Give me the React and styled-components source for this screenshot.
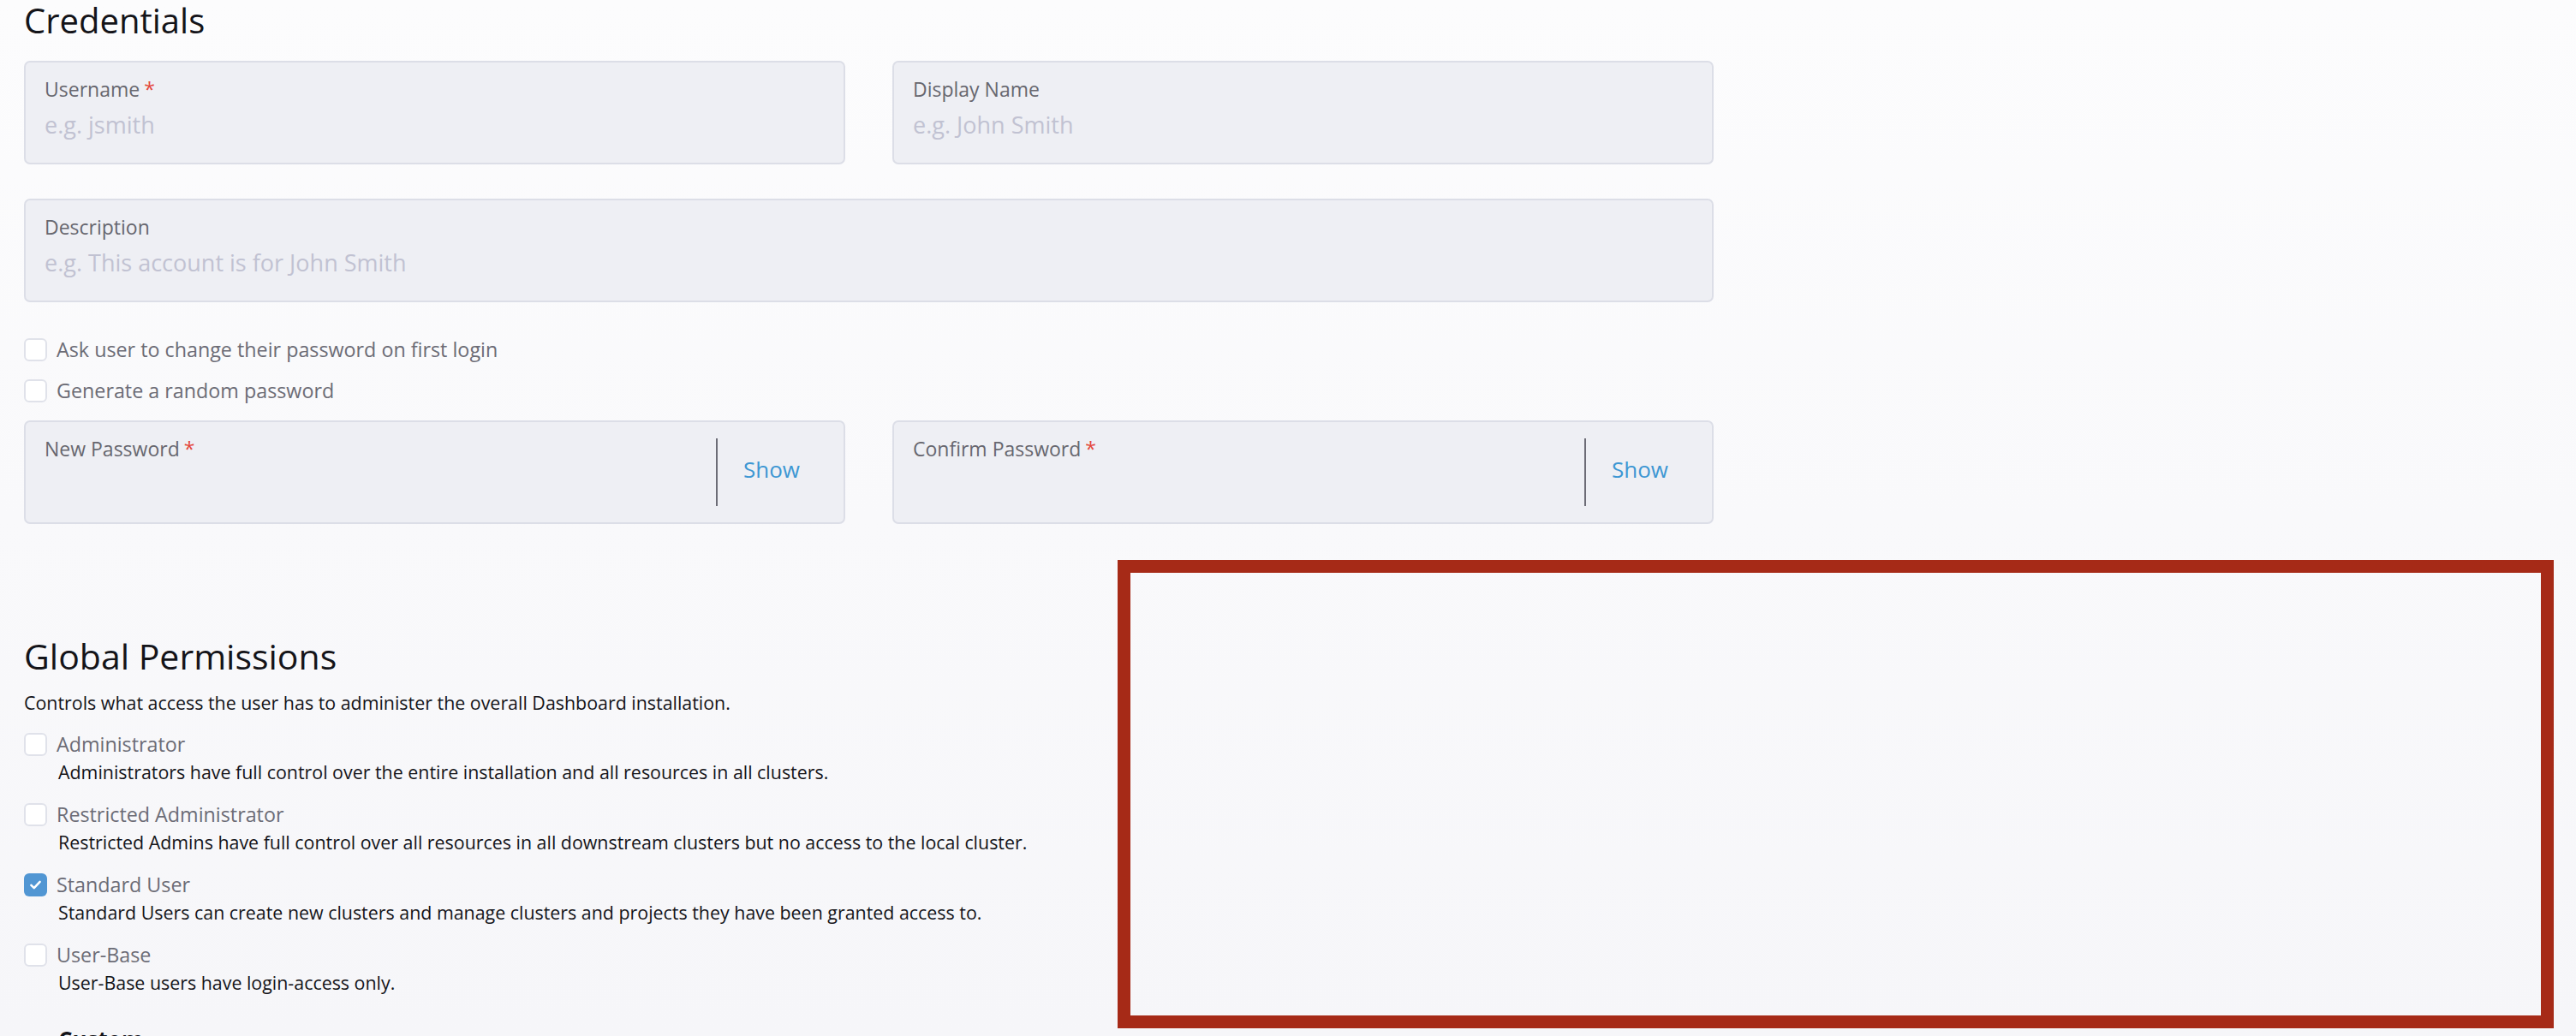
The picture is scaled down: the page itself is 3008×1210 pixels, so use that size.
import React from 'react'
import styled, { createGlobalStyle } from 'styled-components'

const GlobalStyle = createGlobalStyle`
    html, body {
        margin: 0;
        padding: 0;
    }
    body {
        background: linear-gradient(180deg, #fcfcfd 0%, #f6f6f9 100%);
        font-family: "Open Sans", "Noto Sans", sans-serif;
        color: #141419;
        min-height: 1210px;
    }
`;

const Field = ({ label, required, placeholder }) => (
    <FieldBox>
        <Label>
            {label}
            {required && <Required>*</Required>}
        </Label>
        <Placeholder>{placeholder}</Placeholder>
    </FieldBox>
)

const PasswordField = ({ label }) => (
    <PasswordBox>
        <PasswordInput>
            <Label>
                {label}
                <Required>*</Required>
            </Label>
        </PasswordInput>
        <ShowButton>Show</ShowButton>
    </PasswordBox>
)

const Check = ({ checked }) => (
    <CheckBox checked={checked}>
        {checked && (
            <svg width="17" height="17" viewBox="0 0 16 16">
                <path d="M3.2 8.4 L6.4 11.4 L12.8 4.6" fill="none" stroke="#fff" strokeWidth="2.4" strokeLinecap="round" strokeLinejoin="round" />
            </svg>
        )}
    </CheckBox>
)

const options = [
    { name: 'Administrator', text: 'Administrators have full control over the entire installation and all resources in all clusters.' },
    { name: 'Restricted Administrator', text: 'Restricted Admins have full control over all resources in all downstream clusters but no access to the local cluster.' },
    { name: 'Standard User', text: 'Standard Users can create new clusters and manage clusters and projects they have been granted access to.', checked: true },
    { name: 'User-Base', text: 'User-Base users have login-access only.' },
]

const App = () => {
    return (
        <Page>
            <GlobalStyle />
            <Content>
                <Title>Credentials</Title>
                <Row>
                    <Field label="Username" required placeholder="e.g. jsmith" />
                    <Field label="Display Name" placeholder="e.g. John Smith" />
                </Row>
                <FullRow>
                    <Field label="Description" placeholder="e.g. This account is for John Smith" />
                </FullRow>
                <CheckList>
                    <CheckRow>
                        <Check />
                        <CheckLabel>Ask user to change their password on first login</CheckLabel>
                    </CheckRow>
                    <CheckRow>
                        <Check />
                        <CheckLabel>Generate a random password</CheckLabel>
                    </CheckRow>
                </CheckList>
                <PasswordRow>
                    <PasswordField label="New Password" />
                    <PasswordField label="Confirm Password" />
                </PasswordRow>

                <PermTitle>Global Permissions</PermTitle>
                <Intro>Controls what access the user has to administer the overall Dashboard installation.</Intro>
                <OptionList>
                    {options.map((o) => (
                        <Option key={o.name}>
                            <CheckRow>
                                <Check checked={o.checked} />
                                <CheckLabel>{o.name}</CheckLabel>
                            </CheckRow>
                            <OptionText>{o.text}</OptionText>
                        </Option>
                    ))}
                </OptionList>
                <SubTitle>Custom</SubTitle>
            </Content>
            <Highlight />
        </Page>
    )
}

const Page = styled.div`
    position: relative;
    height: 1210px;
    overflow: hidden;
`;
const Content = styled.div`
    width: 1973px;
    padding: 0 0 0 28px;
    display: flex;
    flex-direction: column;
`;
const Title = styled.h3`
    margin: 0 0 23px;
    font-size: 40px;
    line-height: 48px;
    font-weight: 400;
    color: #141419;
`;
const PermTitle = styled(Title)`
    margin: 130px 0 17px;
    font-size: 41px;
`;
const Row = styled.div`
    display: grid;
    grid-template-columns: 1fr 1fr;
    column-gap: 55px;
`;
const FullRow = styled.div`
    margin-top: 40px;
    display: flex;
    flex-direction: column;
`;
const PasswordRow = styled(Row)`
    margin-top: 21px;
`;
const FieldBox = styled.div`
    box-sizing: border-box;
    height: 121px;
    padding: 17px 22px 0;
    background: #eeeff4;
    border: 2px solid #dcdee7;
    border-radius: 7px;
    display: flex;
    flex-direction: column;
`;
const Label = styled.div`
    font-size: 23px;
    line-height: 28px;
    color: #67676f;
`;
const Required = styled.span`
    color: #e4473b;
    margin-left: 5px;
`;
const Placeholder = styled.div`
    margin-top: 12px;
    font-size: 27px;
    line-height: 32px;
    color: #c1c2d2;
`;
const PasswordBox = styled(FieldBox)`
    flex-direction: row;
    align-items: stretch;
    padding: 0 0 0 22px;
`;
const PasswordInput = styled.div`
    flex: 1;
    padding-top: 17px;
`;
const ShowButton = styled.div`
    width: 149px;
    margin: 19px 0;
    padding: 0 0 7px 30px;
    box-sizing: border-box;
    border-left: 2px solid #6c6c76;
    display: flex;
    align-items: center;
    font-size: 26px;
    color: #3d97d3;
`;
const CheckList = styled.div`
    margin-top: 41px;
    display: flex;
    flex-direction: column;
    gap: 20px;
`;
const CheckRow = styled.div`
    display: flex;
    align-items: center;
    gap: 11px;
    height: 28px;
`;
const CheckBox = styled.span`
    box-sizing: border-box;
    width: 27px;
    height: 27px;
    flex: none;
    border-radius: 6px;
    border: ${({ checked }) => (checked ? 'none' : '2px solid #e0e2ea')};
    background: ${({ checked }) => (checked ? '#5196d3' : '#ffffff')};
    display: flex;
    align-items: center;
    justify-content: center;
`;
const CheckLabel = styled.span`
    font-size: 23.3px;
    line-height: 28px;
    color: #6c6c76;
`;
const Intro = styled.div`
    font-size: 21.4px;
    line-height: 28px;
    color: #141419;
`;
const OptionList = styled.div`
    margin-top: 21px;
    display: flex;
    flex-direction: column;
    gap: 22px;
`;
const Option = styled.div`
    display: flex;
    flex-direction: column;
    & > div:first-child {
        margin-top: -1px;
    }
`;
const OptionText = styled.div`
    margin: 5px 0 0 40px;
    font-size: 21.4px;
    line-height: 28px;
    color: #141419;
`;
const SubTitle = styled.div`
    margin: 36px 0 0 40px;
    font-size: 26px;
    line-height: 32px;
    font-weight: 700;
    color: #141419;
`;
const Highlight = styled.div`
    position: absolute;
    left: 1305px;
    top: 654px;
    width: 1677px;
    height: 547px;
    box-sizing: border-box;
    border: 15px solid #a62a17;
    pointer-events: none;
`;

export default App
